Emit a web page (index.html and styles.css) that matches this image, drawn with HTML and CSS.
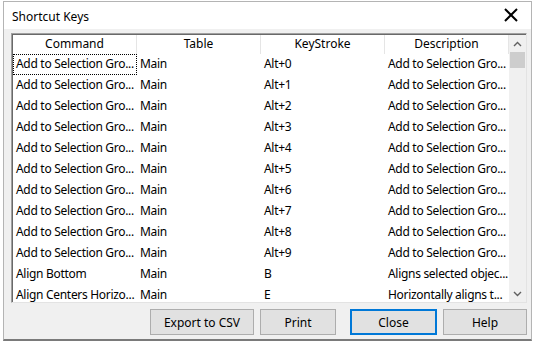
FILE: index.html
```html
<!DOCTYPE html>
<html>
<head>
<meta charset="utf-8">
<link rel="stylesheet" href="styles.css">
</head>
<body>
<div class="dialog">
  <div class="titlebar">
    <span class="title">Shortcut Keys</span>
    <svg class="close" width="14" height="14" viewBox="0 0 14 14"><path d="M1 1 L13 13 M13 1 L1 13" stroke="#000" stroke-width="2"/></svg>
  </div>
  <div class="content">
    <div class="listbox">
      <div class="grid">
        <div class="header">
          <div class="hcell">Command</div>
          <div class="hcell">Table</div>
          <div class="hcell">KeyStroke</div>
          <div class="hcell">Description</div>
        </div>
        <div class="rows">
          <div class="row"><div class="cell focus">Add to Selection Gro...</div><div class="cell">Main</div><div class="cell">Alt+0</div><div class="cell">Add to Selection Gro...</div></div>
          <div class="row"><div class="cell">Add to Selection Gro...</div><div class="cell">Main</div><div class="cell">Alt+1</div><div class="cell">Add to Selection Gro...</div></div>
          <div class="row"><div class="cell">Add to Selection Gro...</div><div class="cell">Main</div><div class="cell">Alt+2</div><div class="cell">Add to Selection Gro...</div></div>
          <div class="row"><div class="cell">Add to Selection Gro...</div><div class="cell">Main</div><div class="cell">Alt+3</div><div class="cell">Add to Selection Gro...</div></div>
          <div class="row"><div class="cell">Add to Selection Gro...</div><div class="cell">Main</div><div class="cell">Alt+4</div><div class="cell">Add to Selection Gro...</div></div>
          <div class="row"><div class="cell">Add to Selection Gro...</div><div class="cell">Main</div><div class="cell">Alt+5</div><div class="cell">Add to Selection Gro...</div></div>
          <div class="row"><div class="cell">Add to Selection Gro...</div><div class="cell">Main</div><div class="cell">Alt+6</div><div class="cell">Add to Selection Gro...</div></div>
          <div class="row"><div class="cell">Add to Selection Gro...</div><div class="cell">Main</div><div class="cell">Alt+7</div><div class="cell">Add to Selection Gro...</div></div>
          <div class="row"><div class="cell">Add to Selection Gro...</div><div class="cell">Main</div><div class="cell">Alt+8</div><div class="cell">Add to Selection Gro...</div></div>
          <div class="row"><div class="cell">Add to Selection Gro...</div><div class="cell">Main</div><div class="cell">Alt+9</div><div class="cell">Add to Selection Gro...</div></div>
          <div class="row"><div class="cell">Align Bottom</div><div class="cell">Main</div><div class="cell">B</div><div class="cell">Aligns selected objec...</div></div>
          <div class="row"><div class="cell">Align Centers Horizo...</div><div class="cell">Main</div><div class="cell">E</div><div class="cell">Horizontally aligns t...</div></div>
        </div>
      </div>
      <div class="scrollbar">
        <div class="arrow"><svg width="9" height="6" viewBox="0 0 9 6"><path d="M1 5 L4.5 1.5 L8 5" fill="none" stroke="#606060" stroke-width="1.4"/></svg></div>
        <div class="thumb"></div>
        <div class="track"></div>
        <div class="arrow"><svg width="9" height="6" viewBox="0 0 9 6"><path d="M1 1 L4.5 4.5 L8 1" fill="none" stroke="#606060" stroke-width="1.4"/></svg></div>
      </div>
    </div>
    <div class="buttons">
      <button class="btn btn-export">Export to CSV</button>
      <button class="btn btn-print">Print</button>
      <button class="btn btn-close default">Close</button>
      <button class="btn btn-help">Help</button>
    </div>
  </div>
</div>
</body>
</html>
```
FILE: styles.css
```css
* { box-sizing: border-box; }
html, body { margin: 0; padding: 0; background: #fff; }
body {
  font-family: "Noto Sans", "Open Sans", sans-serif;
  font-size: 12px;
  color: #000;
  width: 534px;
  height: 347px;
  overflow: hidden;
}
.dialog {
  margin: 1px 0 0 3px;
  width: 529px;
  height: 340px;
  border: 1px solid #b4b4b4;
  border-bottom: 2px solid #7a7a7a;
  display: flex;
  flex-direction: column;
  background: #f0f0f0;
}
.titlebar {
  height: 27px;
  background: #fff;
  display: flex;
  align-items: center;
  justify-content: space-between;
  padding: 1px 13px 0 8px;
  flex: none;
}
.title { font-size: 12px; }
.close { display: block; margin-top: -2px; }
.content {
  flex: 1;
  display: flex;
  flex-direction: column;
  padding: 4px 4px 0 7px;
}
.listbox {
  height: 270px;
  border: 1px solid #828282;
  border-top-color: #a0a0a0;
  border-left-color: #a0a0a0;
  border-right-color: #e3e3e3;
  border-bottom-color: #e3e3e3;
  background: #fff;
  display: flex;
  box-shadow: inset 1px 1px 0 #696969;
  padding: 1px 0 0 1px;
  overflow: hidden;
}
.grid { flex: 1; display: flex; flex-direction: column; overflow: hidden; }
.header {
  display: grid;
  grid-template-columns: 124px 124px 124px 124px;
  height: 19px;
  flex: none;
}
.hcell {
  text-align: center;
  border-right: 1px solid #e5e5e5;
  line-height: 18px;
  white-space: nowrap;
}
.rows { flex: 1; overflow: hidden; }
.row {
  display: grid;
  grid-template-columns: 124px 124px 124px 124px;
  height: 21px;
}
.cell {
  padding-left: 3px;
  line-height: 20px;
  white-space: nowrap;
  letter-spacing: -0.3px;
}
.cell.focus { outline: 1px dotted #000; outline-offset: -1px; }
.scrollbar {
  width: 17px;
  flex: none;
  background: #f0f0f0;
  display: flex;
  flex-direction: column;
}
.arrow {
  height: 17px;
  flex: none;
  display: flex;
  align-items: center;
  justify-content: center;
}
.thumb {
  height: 16px;
  margin: 0 1px;
  background: #cdcdcd;
  flex: none;
}
.track { flex: 1; }
.buttons {
  display: flex;
  gap: 6px;
  margin-top: 6px;
  padding-left: 139px;
}
.btn {
  font-family: inherit;
  font-size: 12px;
  height: 26px;
  background: #e1e1e1;
  border: 1px solid #adadad;
  padding: 0;
  color: #000;
}
.btn-export { width: 104px; }
.btn-print { width: 76px; }
.btn-close { width: 87px; margin-left: 8px; }
.btn-help { width: 84px; }
.btn.default { border: 2px solid #0078d7; }
```
